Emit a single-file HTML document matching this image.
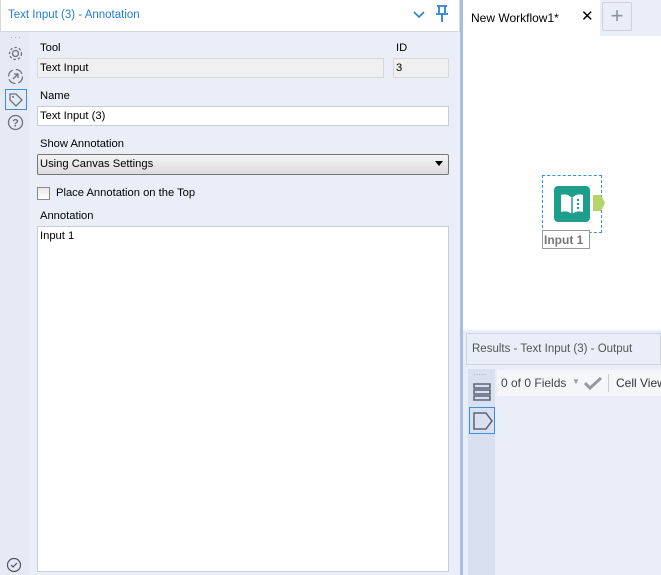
<!DOCTYPE html>
<html><head><style>
*{box-sizing:border-box;margin:0;padding:0}
body{width:661px;height:575px;overflow:hidden;background:#e9eef8;font-family:"Liberation Sans",sans-serif;font-size:11.2px;color:#000;position:relative}
.a{position:absolute}
.inp{position:absolute;border:1px solid #c9ccd2;background:#fff;padding:2px 2px;font-size:11.2px;line-height:14px}
.lbl{position:absolute;font-size:11.2px}
</style></head><body>
<div class="a" style="left:0;top:0;width:460px;height:32px;background:#fff;border:1px solid #d4d8e0;border-top:none"></div>
<div class="a" style="left:8px;top:9px;color:#1f7fd0;font-size:11.5px">Text Input (3) - Annotation</div>
<svg class="a" style="left:413px;top:10px" width="12" height="10"><path d="M1 2 L6 7 L11 2" stroke="#2b7fd4" stroke-width="1.6" fill="none"/></svg>
<svg class="a" style="left:434px;top:5px" width="16" height="18"><path d="M3 1H13M5 1V8M11 1V8M2 9H14M8 9V17" stroke="#2b7fd4" stroke-width="1.8" fill="none"/></svg>
<div class="a" style="left:0;top:32px;width:29px;height:543px;background:#e6eaf4"></div>
<div class="a" style="left:10px;top:32px;color:#9aa;font-size:9px;letter-spacing:1px">···</div>
<svg class="a" style="left:7px;top:45px" width="17" height="17"><circle cx="8.5" cy="8.5" r="3" stroke="#6a7380" fill="none" stroke-width="1.3"/><circle cx="8.5" cy="8.5" r="6" stroke="#6a7380" fill="none" stroke-width="1.3" stroke-dasharray="2.5 2"/></svg>
<svg class="a" style="left:7px;top:68px" width="17" height="17"><circle cx="8.5" cy="8.5" r="7" stroke="#6a7380" fill="none" stroke-width="1.3" stroke-dasharray="8 3"/><path d="M6 11L11 6M7 6H11V10" stroke="#6a7380" stroke-width="1.3" fill="none"/></svg>
<div class="a" style="left:5px;top:89px;width:22px;height:21px;border:1px solid #3b8fe0"></div>
<svg class="a" style="left:8px;top:92px" width="16" height="16"><path d="M2 2H8L14 8L8 14L2 8Z" stroke="#6a7380" fill="none" stroke-width="1.3"/><circle cx="5" cy="5" r="1" fill="#6a7380"/></svg>
<svg class="a" style="left:7px;top:114px" width="17" height="17"><circle cx="8.5" cy="8.5" r="7" stroke="#6a7380" fill="none" stroke-width="1.3"/><text x="8.5" y="12.5" font-size="11" font-weight="bold" text-anchor="middle" fill="#6a7380" font-family="Liberation Sans">?</text></svg>
<svg class="a" style="left:6px;top:557px" width="16" height="16"><circle cx="8" cy="8" r="6.5" stroke="#4a5468" fill="none" stroke-width="1.2"/><path d="M5 8L7 10L11 6" stroke="#4a5468" fill="none" stroke-width="1.2"/></svg>
<div class="lbl" style="left:40px;top:42px">Tool</div>
<div class="inp" style="left:37px;top:58px;width:347px;height:20px;background:#f0f0f0;border-color:#d6d8dc">Text Input</div>
<div class="lbl" style="left:396px;top:42px">ID</div>
<div class="inp" style="left:393px;top:58px;width:56px;height:20px;background:#f0f0f0;border-color:#d6d8dc">3</div>
<div class="lbl" style="left:40px;top:90px">Name</div>
<div class="inp" style="left:37px;top:106px;width:412px;height:20px">Text Input (3)</div>
<div class="lbl" style="left:40px;top:138px">Show Annotation</div>
<div class="inp" style="left:37px;top:154px;width:412px;height:21px;background:linear-gradient(#f4f4f4,#dcdcdc);border-color:#777;border-radius:2px">Using Canvas Settings</div>
<svg class="a" style="left:435px;top:161px" width="8" height="5"><path d="M0 0H8L4 5Z" fill="#000"/></svg>
<div class="a" style="left:37px;top:187px;width:13px;height:13px;border:1px solid #8a8a8a;background:linear-gradient(#e8e8e8,#fff)"></div>
<div class="lbl" style="left:56px;top:187px">Place Annotation on the Top</div>
<div class="lbl" style="left:40px;top:210px">Annotation</div>
<div class="inp" style="left:37px;top:226px;width:412px;height:346px">Input 1</div>
<div class="a" style="left:460px;top:0;width:3px;height:575px;background:#a9bfe2"></div>
<div class="a" style="left:463px;top:0;width:198px;height:36px;background:#e9eef8"></div>
<div class="a" style="left:463px;top:0;width:137px;height:37px;background:#fff"></div>
<div class="a" style="left:471px;top:11px;font-size:12px">New Workflow1*</div>
<div class="a" style="left:581px;top:7px;font-size:15px">✕</div>
<div class="a" style="left:602px;top:2px;width:30px;height:29px;border:1px solid #ccd3e0;border-radius:2px;color:#8a93a2;font-size:22px;line-height:25px;text-align:center">+</div>
<div class="a" style="left:463px;top:36px;width:198px;height:294px;background:#fff"></div>
<div class="a" style="left:542px;top:175px;width:60px;height:58px;border:1px dashed #3b8fe0"></div>
<div class="a" style="left:554px;top:186px;width:36px;height:36px;background:#1f9e8c;border-radius:4px"></div>
<svg class="a" style="left:558px;top:191px" width="28" height="26"><path d="M3 4Q9 2 14 7Q19 2 25 4V21Q19 19 14 23Q9 19 3 21Z" fill="#fff"/><path d="M14 7V23" stroke="#1f9e8c" stroke-width="1.5"/><circle cx="20" cy="9" r="1.2" fill="#1f9e8c"/><circle cx="20" cy="13" r="1.2" fill="#1f9e8c"/><circle cx="20" cy="17" r="1.2" fill="#1f9e8c"/></svg>
<svg class="a" style="left:593px;top:195px" width="12" height="16"><path d="M0 0H8L12 8L8 16H0Z" fill="#b5d56a"/></svg>
<div class="a" style="left:542px;top:230px;width:48px;height:19px;border:1px solid #999;background:#fff;color:#777;font-weight:bold;font-size:12px;padding:2px 1px">Input 1</div>
<div class="a" style="left:466px;top:333px;width:195px;height:32px;border:1px solid #cfd4dc;background:#e9eef8"></div>
<div class="a" style="left:472px;top:343px;color:#555;font-size:11.5px">Results - Text Input (3) - Output</div>
<div class="a" style="left:468px;top:369px;width:27px;height:206px;background:#d9e0ef"></div>
<div class="a" style="left:473px;top:370px;color:#999;font-size:8px">·····</div>
<svg class="a" style="left:473px;top:383px" width="18" height="18"><rect x="1" y="1" width="16" height="4" stroke="#5a6478" fill="none" stroke-width="1.5"/><rect x="1" y="7" width="16" height="4" stroke="#5a6478" fill="none" stroke-width="1.5"/><rect x="1" y="13" width="16" height="4" stroke="#5a6478" fill="none" stroke-width="1.5"/></svg>
<div class="a" style="left:469px;top:407px;width:26px;height:27px;border:1px solid #3b8fe0"></div>
<svg class="a" style="left:472px;top:411px" width="22" height="20"><path d="M2 2H14L20 10L14 18H2Z" stroke="#5a6478" fill="none" stroke-width="1.5"/></svg>
<div class="a" style="left:497px;top:370px;width:164px;height:26px;background:#f4f6fa"></div>
<div class="a" style="left:501px;top:376px;color:#444;font-size:12px">0 of 0 Fields</div>
<div class="a" style="left:572px;top:377px;color:#999;font-size:8px">▼</div>
<svg class="a" style="left:584px;top:376px" width="18" height="14"><path d="M1 7L6 12L17 2" stroke="#999" stroke-width="3" fill="none"/></svg>
<div class="a" style="left:608px;top:374px;width:1px;height:18px;background:#ccc"></div>
<div class="a" style="left:616px;top:376px;color:#333;font-size:12px;white-space:nowrap">Cell Viewer</div>
</body></html>
